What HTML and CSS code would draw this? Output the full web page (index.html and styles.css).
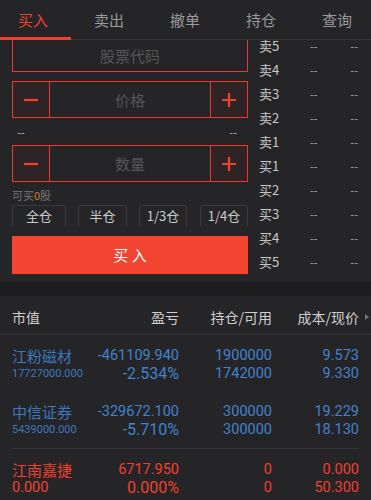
FILE: index.html
```html
<!DOCTYPE html>
<html lang="zh">

<head>
    <meta charset="UTF-8">
    <meta name="viewport" content="width=device-width, initial-scale=1.0">
    <title>交易</title>
    <link rel="stylesheet" href="styles.css">
</head>

<body>
    <div class="tabs">
        <a class="tab on" href="#">买入</a>
        <a class="tab" href="#">卖出</a>
        <a class="tab" href="#">撤单</a>
        <a class="tab" href="#">持仓</a>
        <a class="tab" href="#">查询</a>
    </div>

    <div class="trade">
        <div class="form">
            <div class="code">股票代码</div>
            <div class="stepper">
                <span class="step minus"><svg width="14" height="14" viewBox="0 0 14 14"><path d="M0 7H14" stroke="#f2402f" stroke-width="2.2"/></svg></span>
                <span class="field">价格</span>
                <span class="step plus"><svg width="14" height="14" viewBox="0 0 14 14"><path d="M0 7H14M7 0V14" stroke="#f2402f" stroke-width="2.2"/></svg></span>
            </div>
            <div class="limits"><span>--</span><span>--</span></div>
            <div class="stepper">
                <span class="step minus"><svg width="14" height="14" viewBox="0 0 14 14"><path d="M0 7H14" stroke="#f2402f" stroke-width="2.2"/></svg></span>
                <span class="field">数量</span>
                <span class="step plus"><svg width="14" height="14" viewBox="0 0 14 14"><path d="M0 7H14M7 0V14" stroke="#f2402f" stroke-width="2.2"/></svg></span>
            </div>
            <div class="avail">可买<em>0</em>股</div>
            <div class="pos">
                <a class="p1" href="#">全仓</a>
                <a class="p2" href="#">半仓</a>
                <a class="p3" href="#">1/3仓</a>
                <a class="p4" href="#">1/4仓</a>
            </div>
            <a class="buy" href="#">买 入</a>
        </div>

        <ul class="book">
            <li><span class="lv">卖5</span><span class="d1">--</span><span class="d2">--</span></li>
            <li><span class="lv">卖4</span><span class="d1">--</span><span class="d2">--</span></li>
            <li><span class="lv">卖3</span><span class="d1">--</span><span class="d2">--</span></li>
            <li><span class="lv">卖2</span><span class="d1">--</span><span class="d2">--</span></li>
            <li><span class="lv">卖1</span><span class="d1">--</span><span class="d2">--</span></li>
            <li><span class="lv">买1</span><span class="d1">--</span><span class="d2">--</span></li>
            <li><span class="lv">买2</span><span class="d1">--</span><span class="d2">--</span></li>
            <li><span class="lv">买3</span><span class="d1">--</span><span class="d2">--</span></li>
            <li><span class="lv">买4</span><span class="d1">--</span><span class="d2">--</span></li>
            <li><span class="lv">买5</span><span class="d1">--</span><span class="d2">--</span></li>
        </ul>
    </div>

    <div class="band"></div>

    <div class="head">
        <div class="grid">
            <span>市值</span>
            <span class="r">盈亏</span>
            <span class="r">持仓/可用</span>
            <span class="r last">成本/现价</span>
        </div>
    </div>

    <div class="holdings">
        <div class="grid row blue">
            <span class="name">江粉磁材</span>
            <span class="r">-461109.940</span>
            <span class="r">1900000</span>
            <span class="r">9.573</span>
            <span class="sub">17727000.000</span>
            <span class="r pct">-2.534%</span>
            <span class="r">1742000</span>
            <span class="r">9.330</span>
        </div>
        <div class="grid row blue line">
            <span class="name">中信证券</span>
            <span class="r">-329672.100</span>
            <span class="r">300000</span>
            <span class="r">19.229</span>
            <span class="sub">5439000.000</span>
            <span class="r pct">-5.710%</span>
            <span class="r">300000</span>
            <span class="r">18.130</span>
        </div>
        <div class="grid row red">
            <span class="name">江南嘉捷</span>
            <span class="r">6717.950</span>
            <span class="r">0</span>
            <span class="r">0.000</span>
            <span class="sub big">0.000</span>
            <span class="r pct">0.000%</span>
            <span class="r">0</span>
            <span class="r">50.300</span>
        </div>
    </div>
</body>

</html>
```

FILE: styles.css
```css
* {
    box-sizing: border-box;
    margin: 0;
    padding: 0;
}

body {
    background-color: #252527;
    color: #ccc;
    font-family: "Noto Sans CJK SC", sans-serif;
    overflow: hidden;
}

a {
    text-decoration: none;
    color: inherit;
}

ul {
    list-style: none;
}

/* tabs */
.tabs {
    display: flex;
    height: 40px;
    margin-left: -5px;
    border-bottom: 1px solid #333335;
}

.tab {
    flex: 0 0 76px;
    height: 40px;
    margin-bottom: -1px;
    padding-top: 3px;
    line-height: 34px;
    text-align: center;
    font-size: 15px;
    color: #9a9a9a;
    border-bottom: 3px solid transparent;
}

.tab.on {
    color: #f2402f;
    border-bottom-color: #f2402f;
}

/* order form */
.trade {
    display: flex;
}

.form {
    width: 236px;
    margin-left: 12px;
}

.code {
    height: 32px;
    line-height: 31px;
    text-align: center;
    font-size: 15px;
    color: #555;
    border: 1px solid #e83b2d;
    border-top: none;
}

.stepper {
    display: flex;
    height: 37px;
    margin-top: 9px;
    border: 1px solid #e83b2d;
}

.limits + .stepper {
    margin-top: 0;
}

.step {
    display: flex;
    align-items: center;
    justify-content: center;
    width: 37px;
    background-color: #2f2425;
}

.minus {
    border-right: 1px solid #e83b2d;
}

.plus {
    border-left: 1px solid #e83b2d;
}

.field {
    flex: 1;
    line-height: 35px;
    text-align: center;
    font-size: 15px;
    color: #555;
}

.limits {
    display: flex;
    justify-content: space-between;
    height: 27px;
    padding: 0 11px 0 5px;
    line-height: 29px;
    font-size: 11px;
    color: #bbb;
}

.avail {
    height: 23px;
    padding-top: 3px;
    line-height: 20px;
    font-size: 11px;
    color: #777;
}

.avail em {
    font-style: normal;
    color: #d4841e;
}

.pos {
    display: flex;
    height: 21px;
}

.pos a {
    height: 21px;
    line-height: 20px;
    text-align: center;
    font-size: 13px;
    color: #ccc;
    border: 1px solid #3a3a3c;
    border-bottom: none;
    border-radius: 3px 3px 0 0;
}

.p1 {
    width: 54px;
}

.p2 {
    width: 49px;
    margin-left: 12px;
}

.p3 {
    width: 48px;
    margin-left: 12px;
}

.p4 {
    width: 48px;
    margin-left: 13px;
}

.buy {
    display: block;
    height: 38px;
    margin-top: 10px;
    line-height: 38px;
    text-align: center;
    font-size: 15px;
    color: #fff;
    background-color: #f44532;
}

/* order book */
.book {
    flex: 1;
    margin-top: -6px;
    margin-left: 10px;
    padding-left: 1px;
}

.book li {
    display: flex;
    height: 24px;
    line-height: 24px;
    font-size: 13px;
}

.lv {
    flex: 0 0 51px;
    color: #c8c8c8;
}

.d1,
.d2 {
    font-size: 11px;
    color: #aaa;
}

.d1 {
    flex: 1;
}

.d2 {
    padding-right: 13px;
}

.band {
    height: 14px;
    margin-top: 8px;
    background-color: #1d1d1f;
}

/* holdings */
.grid {
    display: grid;
    grid-template-columns: 85px 82px 93px 87px;
}

.r {
    text-align: right;
}

.head {
    height: 39px;
    padding: 4px 12px 0;
    border-bottom: 1px solid #333335;
}

.head span {
    line-height: 35px;
    font-size: 14px;
    color: #cfcfcf;
}

.head .last {
    position: relative;
}

.head .last::after {
    content: "";
    position: absolute;
    right: -10px;
    top: 14px;
    border-left: 4px solid #777;
    border-top: 3px solid transparent;
    border-bottom: 3px solid transparent;
}

.holdings {
    padding: 0 12px;
}

.row {
    padding: 12px 0 8px;
    line-height: 18px;
    font-family: Roboto, "Noto Sans CJK SC", sans-serif;
    font-size: 14.5px;
}

.row.line {
    padding-bottom: 9px;
    border-bottom: 1px solid #333335;
}

.row .name {
    font-family: "Noto Sans CJK SC", sans-serif;
    font-size: 15px;
}

.row .sub {
    font-size: 11px;
}

.row .sub.big {
    font-size: 14.5px;
}

.row .pct {
    font-size: 16px;
}

.blue {
    color: #4282cc;
}

.blue .name,
.blue .sub {
    color: #3d78bd;
}

.red {
    color: #f2402f;
}
```
